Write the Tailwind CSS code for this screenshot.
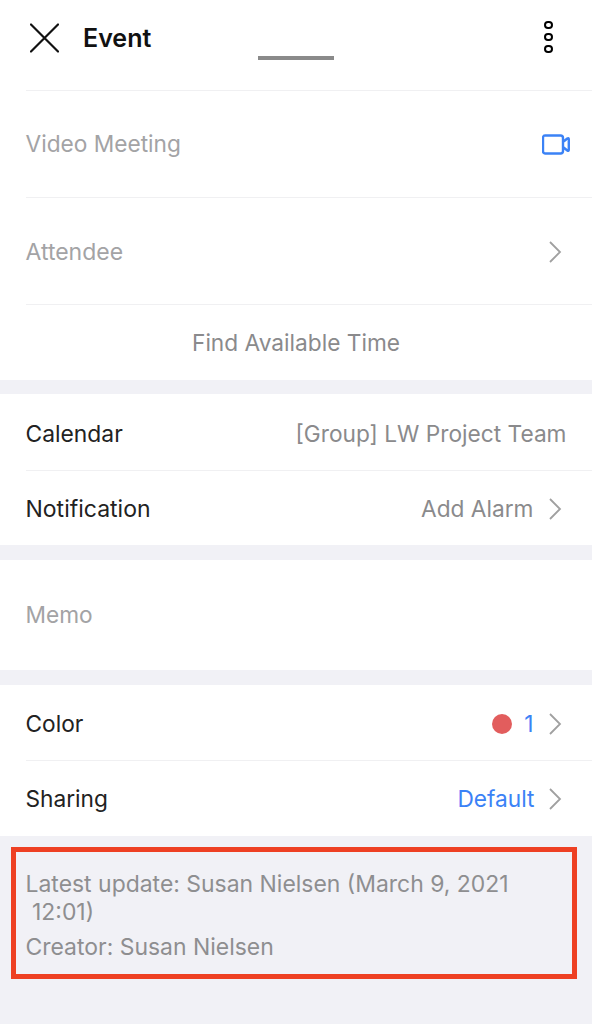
<!DOCTYPE html>
<html><head><meta charset="utf-8"><script src="https://cdn.jsdelivr.net/npm/@tailwindcss/browser@4"></script></head>
<body class="m-0">
<div class="relative w-[592px] h-[1024px] overflow-hidden bg-[#f1f1f6] font-['Inter','Liberation_Sans',sans-serif] text-[22.7px] leading-[28px]">
  <div class="bg-white">
    <header class="relative flex items-center h-[76px] pl-[30px] pr-[39px]">
      <svg class="w-[29px] h-[30px]" viewBox="0 0 29 30" fill="none" stroke="#111" stroke-width="2.2" stroke-linecap="round"><path d="M1 1.5 L28 28.5 M28 1.5 L1 28.5"/></svg>
      <span class="ml-[24px] text-[25px] font-semibold text-[#111]">Event</span>
      <div class="ml-auto mb-[2px] flex flex-col gap-[3.4px]">
        <span class="w-[8.6px] h-[8.6px] rounded-full border-[2.7px] border-black"></span>
        <span class="w-[8.6px] h-[8.6px] rounded-full border-[2.7px] border-black"></span>
        <span class="w-[8.6px] h-[8.6px] rounded-full border-[2.7px] border-black"></span>
      </div>
      <div class="absolute left-[258px] top-[56px] w-[76px] h-[4px] bg-[#8a8a8a]"></div>
    </header>
    <div class="ml-[25.5px] h-[15px] border-b border-[#f0f0f2]"></div>
    <div class="flex items-center h-[107px] ml-[25.5px] pr-[22.5px] border-b border-[#f0f0f2] text-[#a3a3a5]">
      <span>Video Meeting</span>
      <svg class="ml-auto w-[28px] h-[21px]" viewBox="0 0 28 21" fill="none" stroke="#3b82f6" stroke-width="2.4" stroke-linejoin="round"><path d="M3 1.5 H18.5 Q21 1.5 21 4 V17 Q21 19.5 18.5 19.5 H3 Q1 19.5 1 17 V4 Q1 1.5 3 1.5 Z M21 8 L25.3 4.5 Q26.8 3.5 26.8 5.5 V15.5 Q26.8 17.5 25.3 16.5 L21 13"/></svg>
    </div>
    <div class="flex items-center h-[107px] pt-[1px] ml-[25.5px] pr-[30.5px] border-b border-[#f0f0f2] text-[#a3a3a5]">
      <span class="text-[23px]">Attendee</span>
      <svg class="ml-auto w-[14px] h-[22px]" viewBox="0 0 14 22" fill="none" stroke="#a0a0a0" stroke-width="1.8"><path d="M2 1 L12 11 L2 21"/></svg>
    </div>
    <div class="flex items-center justify-center h-[75px] text-[#8a8a8c]">Find Available Time</div>
  </div>
  <div class="mt-[14px] bg-white">
    <div class="flex items-center h-[77px] pt-[3px] ml-[25.5px] pr-[25.5px] border-b border-[#f0f0f2]">
      <span class="text-[22.85px] text-[#222]">Calendar</span>
      <span class="ml-auto text-[#8a8a8c]">[Group] LW Project Team</span>
    </div>
    <div class="flex items-center h-[74px] pt-[1px] ml-[25.5px] pr-[30.5px]">
      <span class="text-[23px] text-[#222]">Notification</span>
      <span class="ml-auto text-[#8a8a8c]">Add Alarm</span>
      <svg class="ml-[14px] w-[14px] h-[22px]" viewBox="0 0 14 22" fill="none" stroke="#a0a0a0" stroke-width="1.8"><path d="M2 1 L12 11 L2 21"/></svg>
    </div>
  </div>
  <div class="mt-[15px] bg-white flex items-center h-[110px] pl-[25.5px] text-[#a3a3a5]">Memo</div>
  <div class="mt-[15px] bg-white">
    <div class="flex items-center h-[76px] pt-[2px] ml-[25.5px] pr-[30.5px] border-b border-[#f0f0f2]">
      <span class="text-[#222]">Color</span>
      <span class="ml-auto w-[20px] h-[20px] rounded-full bg-[#e25d5d]"></span>
      <span class="ml-[12px] text-[#3b82f6]">1</span>
      <svg class="ml-[14px] w-[14px] h-[22px]" viewBox="0 0 14 22" fill="none" stroke="#a0a0a0" stroke-width="1.8"><path d="M2 1 L12 11 L2 21"/></svg>
    </div>
    <div class="flex items-center h-[75px] pt-[1px] ml-[25.5px] pr-[30.5px]">
      <span class="text-[#222]">Sharing</span>
      <span class="ml-auto text-[#3b82f6]">Default</span>
      <svg class="ml-[13px] w-[14px] h-[22px]" viewBox="0 0 14 22" fill="none" stroke="#a0a0a0" stroke-width="1.8"><path d="M2 1 L12 11 L2 21"/></svg>
    </div>
  </div>
  <div class="pt-[34px] pl-[25.5px] pr-[26px] text-[22.95px] text-[#8e8e90]">
    <p class="leading-[28px]">Latest update: Susan Nielsen (March 9, 2021<br>&nbsp;12:01)</p>
    <p class="mt-[7px] leading-[28px]">Creator: Susan Nielsen</p>
  </div>
  <div class="absolute left-[10.5px] top-[847px] w-[566px] h-[132px] border-[5.5px] border-[#ee4023]"></div>
</div>
</body></html>
